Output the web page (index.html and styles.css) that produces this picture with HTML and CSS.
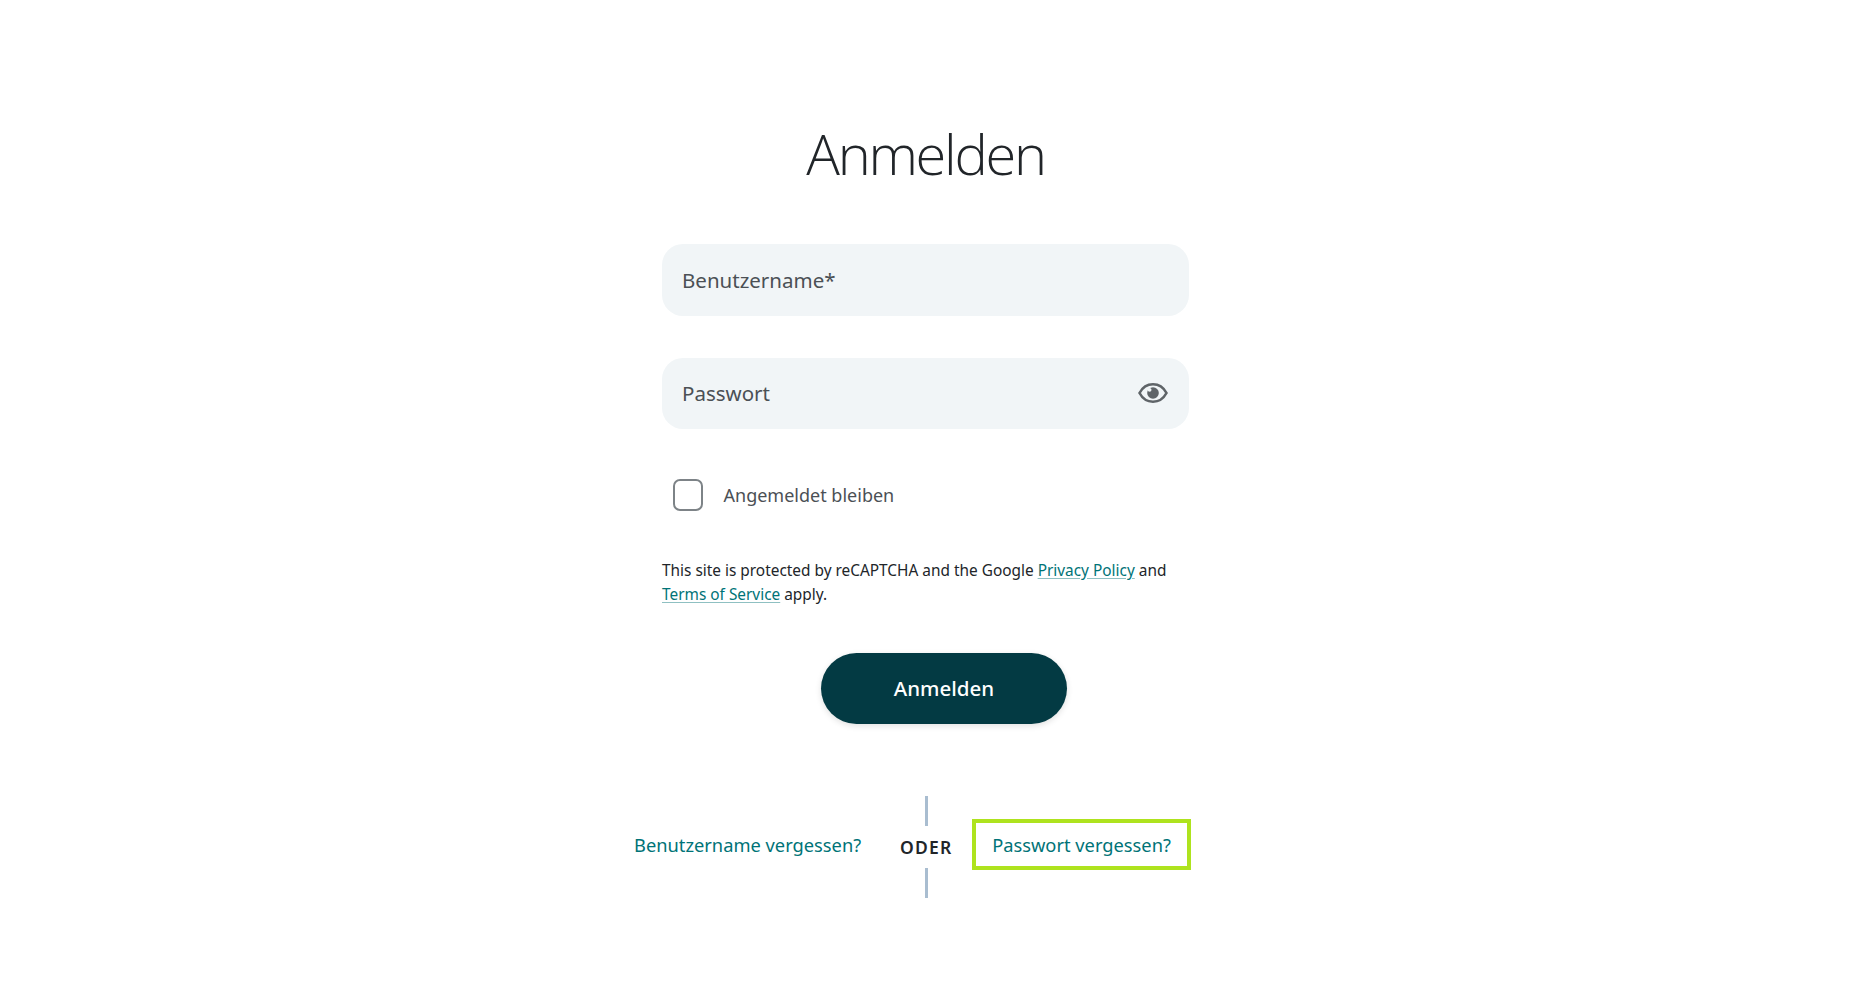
FILE: index.html
```html
<!DOCTYPE html>
<html lang="de">
<head>
    <meta charset="UTF-8">
    <title>Anmelden</title>
    <link rel="stylesheet" href="styles.css">
</head>
<body>
    <div class="login">
        <h1>Anmelden</h1>

        <!-- Login form -->
        <form class="login-form">
            <div class="field">
                <span class="field-label">Benutzername*</span>
            </div>
            <div class="field">
                <span class="field-label">Passwort</span>
                <svg class="eye-icon" viewBox="0 0 30 20" width="30" height="20">
                    <path d="M1.500 10C4.500 4.400 9.400 1.300 15 1.300S25.500 4.400 28.500 10C25.500 15.600 20.600 18.700 15 18.700S4.500 15.600 1.500 10Z" fill="none" stroke="#5f6468" stroke-width="2.600"/>
                    <circle cx="15" cy="10" r="5.800" fill="#5f6468"/>
                    <circle cx="11.600" cy="6.800" r="1.900" fill="#f1f5f7"/>
                </svg>
            </div>
            <label class="remember">
                <span class="checkbox"></span>
                <span>Angemeldet bleiben</span>
            </label>
            <p class="recaptcha">This site is protected by reCAPTCHA and the Google <a href="#">Privacy Policy</a> and <a href="#">Terms of Service</a> apply.</p>
            <button type="button" class="submit-button">Anmelden</button>
        </form>

        <!-- Forgotten links -->
        <div class="help-links">
            <a href="#" class="help-link">Benutzername vergessen?</a>
            <div class="divider">
                <span class="divider-line"></span>
                <span class="divider-text">ODER</span>
                <span class="divider-line"></span>
            </div>
            <a href="#" class="help-link focused">Passwort vergessen?</a>
        </div>
    </div>
</body>
</html>
```

FILE: styles.css
```css
/* Basic page styling */
body {
    font-family: "Noto Sans", "Open Sans", sans-serif;
    margin: 0;
    background: white;
    color: #212529;
}

.login {
    width: 527px;
    margin-left: 662px;
    padding-top: 112px;
}

/* Header */
h1 {
    margin: 0 0 49px 0;
    height: 83px;
    line-height: 83px;
    text-align: center;
    font-family: "Open Sans", "Noto Sans", sans-serif;
    font-size: 56px;
    font-weight: 300;
    letter-spacing: -2.300px;
    color: #212529;
}

/* Form */
.field {
    display: flex;
    align-items: center;
    justify-content: space-between;
    height: 71.500px;
    margin-bottom: 42px;
    padding: 0 21px 0 20px;
    background: #f1f5f7;
    border-radius: 21px;
}

.field-label {
    font-size: 20.500px;
    color: #4b5055;
}

.remember {
    display: flex;
    align-items: center;
    gap: 21px;
    margin: 50px 0 48px 11px;
    font-size: 18px;
    color: #4b5055;
}

.checkbox {
    width: 25.500px;
    height: 27.500px;
    border: 2.500px solid #7d8387;
    border-radius: 7px;
}

.recaptcha {
    margin: 0 0 46px 0;
    font-size: 15.400px;
    line-height: 24px;
    color: #212529;
}

.recaptcha a {
    color: #007377;
    text-underline-offset: 2px;
    text-decoration-color: #8fc0c2;
}

.submit-button {
    display: block;
    width: 246px;
    height: 71px;
    margin-left: 159px;
    padding: 0 0 1px 0;
    border: none;
    border-radius: 36px;
    background: #033a43;
    color: white;
    font-family: inherit;
    font-size: 20.500px;
    font-weight: 500;
    box-shadow: 0 2px 6px rgba(0,0,0,0.12);
}

/* Links below the form */
.help-links {
    display: flex;
    align-items: center;
    margin: 72px 0 0 -28px;
    width: 590px;
}

.help-link {
    margin-bottom: 5px;
    font-size: 18.300px;
    color: #007377;
    text-decoration: none;
    white-space: nowrap;
}

.help-link.focused {
    margin-left: 20px;
    padding: 9px 16px;
    border: 4px solid #aee31e;
}

.divider {
    display: flex;
    flex-direction: column;
    align-items: center;
    width: 52px;
    margin-left: 39px;
}

.divider-line {
    width: 3px;
    height: 30px;
    background: #a9bdd0;
}

.divider-text {
    padding: 9px 0;
    font-size: 17.500px;
    font-weight: 600;
    letter-spacing: 1.200px;
    color: #212529;
}
```
